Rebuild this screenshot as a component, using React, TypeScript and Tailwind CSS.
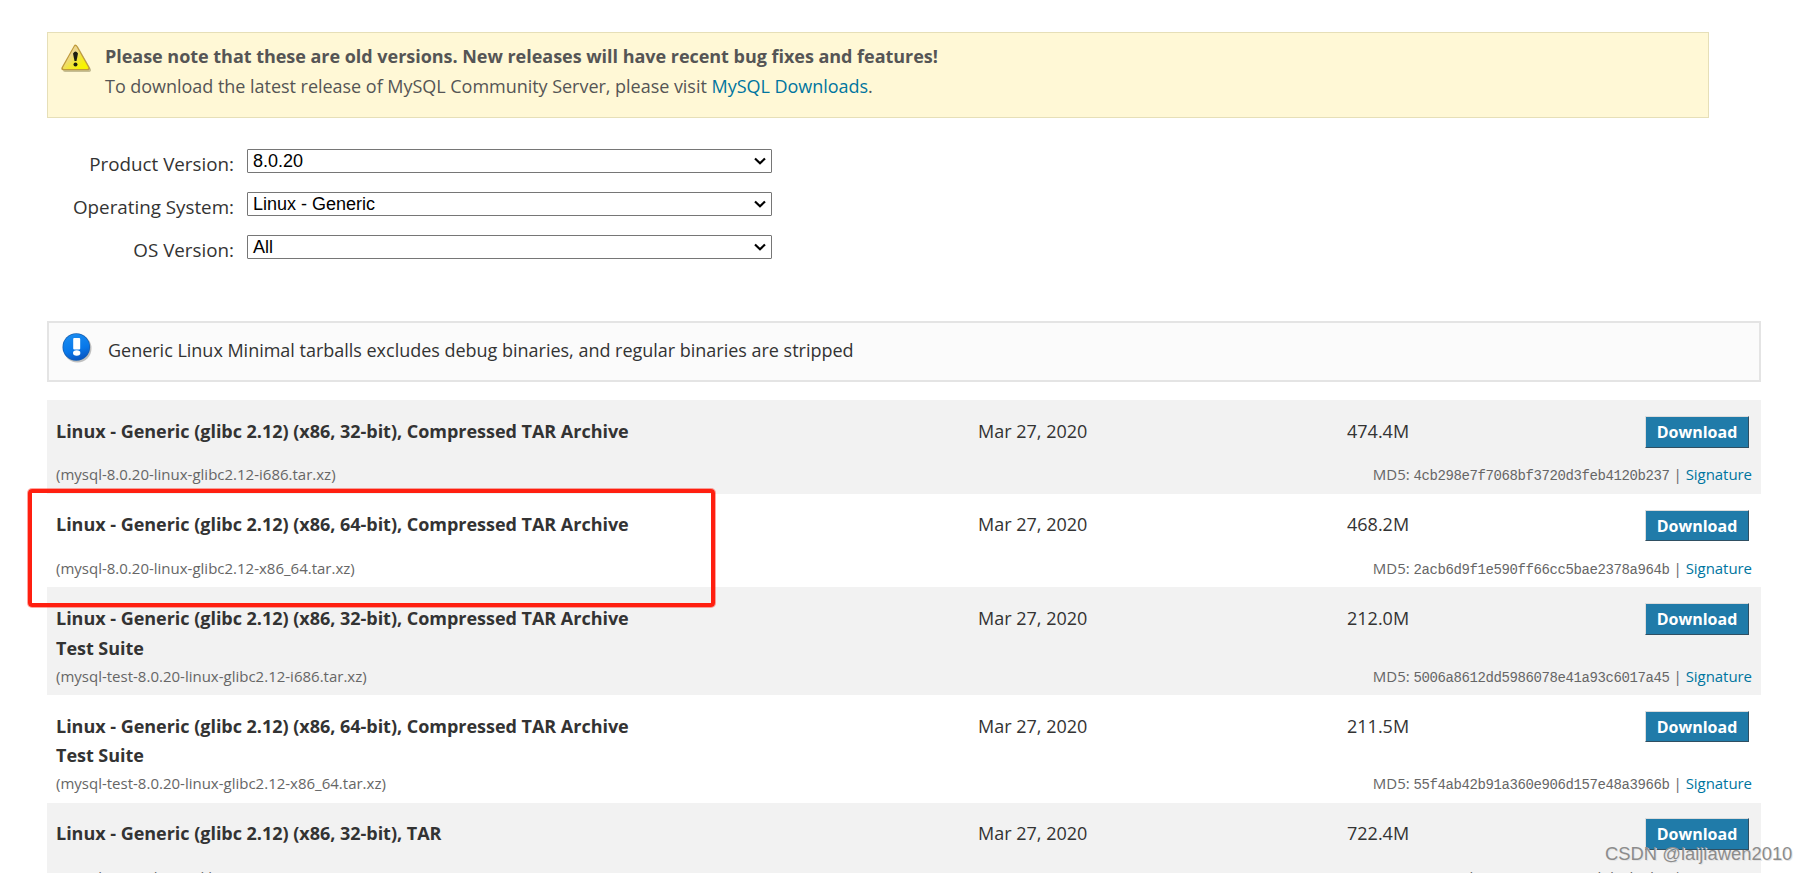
import React from "react";

const files = [
  { name: "Linux - Generic (glibc 2.12) (x86, 32-bit), Compressed TAR Archive", file: "mysql-8.0.20-linux-glibc2.12-i686.tar.xz", size: "474.4M", md5: "4cb298e7f7068bf3720d3feb4120b237", row: "h-[94px] pt-4 pb-2", btn: "h-8" },
  { name: "Linux - Generic (glibc 2.12) (x86, 64-bit), Compressed TAR Archive", file: "mysql-8.0.20-linux-glibc2.12-x86_64.tar.xz", size: "468.2M", md5: "2acb6d9f1e590ff66cc5bae2378a964b", row: "h-[93px] pt-[15px] pb-[7px]", btn: "mt-px h-[31px]" },
  { name: "Linux - Generic (glibc 2.12) (x86, 32-bit), Compressed TAR Archive", suite: "Test Suite", file: "mysql-test-8.0.20-linux-glibc2.12-i686.tar.xz", size: "212.0M", md5: "5006a8612dd5986078e41a93c6017a45", row: "h-[108px] pt-4 pb-[7px]", btn: "h-8" },
  { name: "Linux - Generic (glibc 2.12) (x86, 64-bit), Compressed TAR Archive", suite: "Test Suite", file: "mysql-test-8.0.20-linux-glibc2.12-x86_64.tar.xz", size: "211.5M", md5: "55f4ab42b91a360e906d157e48a3966b", row: "h-[108px] pt-4 pb-2", btn: "h-[31px]" },
  { name: "Linux - Generic (glibc 2.12) (x86, 32-bit), TAR", file: "mysql-8.0.20-linux-glibc2.12-i686.tar", size: "722.4M", md5: "9c50a37b2e64191805a36c0bd17b4d52", row: "h-[94px] pt-[15px] pb-2", btn: "h-8" },
];

const filters = [
  { label: "Product Version:", value: "8.0.20" },
  { label: "Operating System:", value: "Linux - Generic" },
  { label: "OS Version:", value: "All" },
];

const WarningIcon = () => (
  <svg width="31" height="29" viewBox="0 0 31 29" className="shrink-0">
    <defs>
      <linearGradient id="warn" x1="0" y1="0" x2="1" y2="1">
        <stop offset="0.35" stopColor="#ecd68c" />
        <stop offset="0.6" stopColor="#f3e63a" />
        <stop offset="0.85" stopColor="#f8f400" />
      </linearGradient>
    </defs>
    <path d="M15.5 4 L28 26 H4 Z" fill="#8f8654" stroke="#8f8654" strokeWidth="4" strokeLinejoin="round" opacity="0.5" />
    <path d="M14.5 2.6 L27 24.4 H2.2 Z" fill="#c9a24a" stroke="#c09a3a" strokeWidth="3.8" strokeLinejoin="round" />
    <path d="M14.5 3 L26.4 23.9 H2.9 Z" fill="url(#warn)" stroke="url(#warn)" strokeWidth="2" strokeLinejoin="round" />
    <path d="M12 9.5 Q14.5 5.5 17 9.5 L15.5 17 H13.5 Z" fill="#1c1c10" />
    <circle cx="14.5" cy="20.5" r="2" fill="#1c1c10" />
  </svg>
);

const InfoIcon = () => (
  <svg width="31" height="31" viewBox="0 0 31 31" className="shrink-0">
    <defs>
      <linearGradient id="info" x1="0.3" y1="0" x2="0.6" y2="1">
        <stop offset="0" stopColor="#1a8cf0" />
        <stop offset="0.6" stopColor="#0878ea" />
        <stop offset="1" stopColor="#0a55c0" />
      </linearGradient>
    </defs>
    <circle cx="15.5" cy="15.5" r="14" fill="#777" opacity="0.45" />
    <circle cx="14.3" cy="14" r="13.8" fill="#1560b4" />
    <circle cx="14.3" cy="14" r="13" fill="url(#info)" />
    <rect x="11.2" y="5" width="7" height="11.5" rx="1" fill="#fff" />
    <ellipse cx="14.7" cy="20" rx="3.7" ry="2.7" fill="#fff" />
  </svg>
);

const App: React.FC = () => {
  return (
    <div className="relative h-[873px] w-[1807px] overflow-hidden bg-white pt-8 pl-[47px] font-['Open_Sans',sans-serif] text-[18px] text-[#333]">
      {/* Old version notice */}
      <div className="flex h-[86px] w-[1662px] border border-[#e6dfb8] bg-[#fff8d6] pt-[11px] pl-[13px] text-[#555]">
        <WarningIcon />
        <div className="-mt-[3px] ml-[13px] leading-[30px] whitespace-nowrap">
          <p className="font-bold tracking-[-0.03px]">Please note that these are old versions. New releases will have recent bug fixes and features!</p>
          <p className="tracking-[-0.03px]">
            To download the latest release of MySQL Community Server, please visit{" "}
            <a className="text-[#00759f]">MySQL Downloads</a>.
          </p>
        </div>
      </div>

      {/* Filters */}
      <div className="mt-[31px] flex flex-col gap-[19px]">
        {filters.map((f) => (
          <div key={f.label} className="flex h-6">
            <label className="w-[187px] pt-[3px] text-right text-[18.8px] leading-6 whitespace-nowrap">{f.label}</label>
            <div className="ml-[13px] flex h-6 w-[525px] items-center justify-between rounded-[1px] border border-[#767676] pr-[5px] pl-[5px] font-['Liberation_Sans',sans-serif] text-black">
              <span className="leading-[22px]">{f.value}</span>
              <svg width="12" height="8" viewBox="0 0 12 8" fill="none" stroke="#000" strokeWidth="2.2">
                <path d="M1 1.5 L6 6.2 L11 1.5" />
              </svg>
            </div>
          </div>
        ))}
      </div>

      {/* Info message */}
      <div className="mt-[62px] flex h-[61px] w-[1714px] border-2 border-[#e4e4e4] bg-[#fbfbfb] pt-[10px] pl-[13px]">
        <InfoIcon />
        <p className="ml-[15px] pt-[2px] leading-[30px] tracking-[-0.015px] whitespace-nowrap">
          Generic Linux Minimal tarballs excludes debug binaries, and regular binaries are stripped
        </p>
      </div>

      {/* Downloads */}
      <div className="mt-[18px] w-[1714px]">
        {files.map((f, i) => (
          <div key={f.md5} className={`${f.row} flex flex-col justify-between pr-[9px] pl-[9px] ${i % 2 === 0 ? "bg-[#f2f2f2]" : "bg-white"}`}>
            <div className="flex h-[31px] whitespace-nowrap">
              <div className="w-[922px] leading-[30px] font-bold tracking-[-0.025px]">
                {f.name}
                {f.suite && <div className={i === 3 ? "-mt-px" : ""}>{f.suite}</div>}
              </div>
              <div className="w-[369px] leading-[30px]">Mar 27, 2020</div>
              <div className="w-[298px] leading-[30px]">{f.size}</div>
              <button className={`${f.btn} w-[104px] border border-t-[#dcdcdc] border-r-[#2f4f62] border-b-[#2f4f62] border-l-[#dcdcdc] bg-[#207ba9] text-[16px] leading-[30px] font-bold text-white`}>
                Download
              </button>
            </div>
            <div className="flex h-6 justify-between text-[15px] leading-6 whitespace-nowrap text-[#666]">
              <span>({f.file})</span>
              <span>
                MD5: <code className="font-['Liberation_Mono',monospace] text-[14px] leading-none tracking-[-0.4px]">{f.md5}</code> |{" "}
                <a className="tracking-[-0.05px] text-[#00759f]">Signature</a>
              </span>
            </div>
          </div>
        ))}
      </div>

      {/* Highlight around the 64-bit archive */}
      <div className="absolute top-[489px] left-[28px] h-[118px] w-[687px] rounded-[4px] border-4 border-[#ff1f10] shadow-[0_0_0_1px_#ff1f1066]" />
      <div className="absolute top-[842px] left-[1605px] font-['Liberation_Sans',sans-serif] text-[18.4px] leading-6 whitespace-nowrap text-[#8c8c8c] [text-shadow:1px_1px_0_#e4e4e4]">
        CSDN @laijiawen2010
      </div>
    </div>
  );
};

export default App;
